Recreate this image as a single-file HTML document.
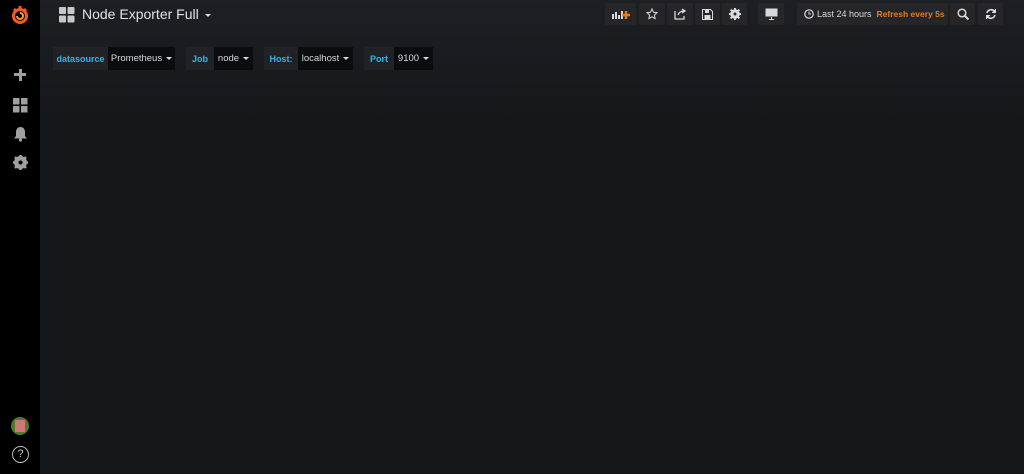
<!DOCTYPE html>
<html><head><style>
*{box-sizing:border-box;margin:0;padding:0}
body{width:1024px;height:474px;background:#161719;font-family:"Liberation Sans",sans-serif;position:relative;overflow:hidden;color:#d8d9da}
.side{position:absolute;left:0;top:0;width:40px;height:474px;background:#000}
.main{position:absolute;left:40px;top:0;right:0;height:474px;background:linear-gradient(#1e1f22 0,#161719 120px)}
.ab{position:absolute}
.btn{position:absolute;top:3px;height:22px;background:#262628;border-radius:2px;display:flex;align-items:center;justify-content:center;white-space:nowrap}
.btn svg{flex-shrink:0}
.lbl{position:absolute;top:47px;height:23px;background:#202226;color:#33b5e5;font-size:9px;font-weight:bold;display:flex;align-items:center;justify-content:center;white-space:nowrap}
.val{position:absolute;top:47px;height:23px;background:#0b0c0e;color:#d8d9da;font-size:9.5px;display:flex;align-items:center;justify-content:center;white-space:nowrap}
.car{display:inline-block;width:0;height:0;border-left:3px solid transparent;border-right:3px solid transparent;border-top:3px solid #d8d9da;margin-left:4px}
</style></head><body>
<div class="side">
<svg class="ab" style="left:9px;top:4px" width="22" height="22" viewBox="0 0 22 22"><circle cx="11" cy="12" r="8" fill="#f05a28"/><circle cx="11" cy="12" r="5" fill="#000"/><path d="M11 9a3 3 0 1 1-3 3" stroke="#f7a21b" stroke-width="2" fill="none"/><path d="M5 5l2 2M17 5l-2 2M11 2v3M3 12h2M19 12h-2" stroke="#f05a28" stroke-width="3"/></svg>
<div class="ab" style="left:14px;top:73px;width:12px;height:3px;background:#a0a0a0"></div>
<div class="ab" style="left:18.5px;top:69px;width:3px;height:12px;background:#a0a0a0"></div>
<svg class="ab" style="left:13px;top:98px" width="15" height="15"><rect x="0" y="0" width="6.5" height="6.5" fill="#a0a0a0"/><rect x="8" y="0" width="6.5" height="6.5" fill="#a0a0a0"/><rect x="0" y="8" width="6.5" height="6.5" fill="#a0a0a0"/><rect x="8" y="8" width="6.5" height="6.5" fill="#a0a0a0"/></svg>
<svg class="ab" style="left:13px;top:126px" width="15" height="16"><path d="M7.5 1c-3 0-4.5 2.5-4.5 5v4L1 12.5h13L12 10V6c0-2.5-1.5-5-4.5-5z" fill="#a0a0a0"/><circle cx="7.5" cy="14" r="1.6" fill="#a0a0a0"/></svg>
<svg class="ab" style="left:13px;top:155px" width="15" height="15" viewBox="0 0 15 15"><circle cx="7.5" cy="7.5" r="5" fill="none" stroke="#a0a0a0" stroke-width="3"/><path d="M7.5 0v15M0 7.5h15M2 2l11 11M13 2L2 13" stroke="#a0a0a0" stroke-width="2.5"/><circle cx="7.5" cy="7.5" r="2" fill="#000"/></svg>
<div class="ab" style="left:11px;top:417px;width:18px;height:18px;border-radius:50%;background:#4e7a2a;overflow:hidden"><div style="margin:3px 4px;width:10px;height:12px;background:#d07878"></div></div>
<div class="ab" style="left:12px;top:446px;width:17px;height:17px;border-radius:50%;border:1.3px solid #bbb;color:#ccc;font-size:11px;text-align:center;line-height:15px">?</div>
</div>
<div class="main"></div>
<svg class="ab" style="left:59px;top:7px" width="16" height="16"><rect x="0" y="0" width="7" height="7" rx="1" fill="#c8c8c8"/><rect x="8.5" y="0" width="7" height="7" rx="1" fill="#c8c8c8"/><rect x="0" y="8.5" width="7" height="7" rx="1" fill="#c8c8c8"/><rect x="8.5" y="8.5" width="7" height="7" rx="1" fill="#c8c8c8"/></svg>
<div class="ab" style="left:82px;top:6px;font-size:14px;color:#e3e3e3">Node Exporter Full<span class="car" style="margin-left:6px;vertical-align:middle"></span></div>

<div class="btn" style="left:605px;width:31px"><svg width="18" height="12"><path d="M1 11V6M4 11V4M7 11V7M10 11V3" stroke="#d8d9da" stroke-width="2"/><path d="M14 3v8M10 7h8" stroke="#eb7b18" stroke-width="2.5"/></svg></div>
<div class="btn" style="left:639px;width:26px"><svg width="12" height="12"><path d="M6 1l1.5 3.3 3.5.4-2.6 2.4.7 3.5L6 8.8 2.9 10.6l.7-3.5L1 4.7l3.5-.4z" fill="none" stroke="#d8d9da"/></svg></div>
<div class="btn" style="left:667px;width:26px"><svg width="12" height="12"><path d="M1 3v8h9V8M4 7c1-3 3-4 6-4M8 1l3 2-3 2" fill="none" stroke="#d8d9da" stroke-width="1.3"/></svg></div>
<div class="btn" style="left:695px;width:25px"><svg width="11" height="11"><path d="M.5.5h8l2 2v8H.5z" fill="none" stroke="#d8d9da"/><rect x="3" y="1" width="4" height="3" fill="#d8d9da"/><rect x="2.5" y="6" width="6" height="4" fill="#d8d9da"/></svg></div>
<div class="btn" style="left:722px;width:25px"><svg width="12" height="12" viewBox="0 0 15 15"><circle cx="7.5" cy="7.5" r="4.5" fill="none" stroke="#d8d9da" stroke-width="3"/><path d="M7.5 0v15M0 7.5h15M2 2l11 11M13 2L2 13" stroke="#d8d9da" stroke-width="2.5"/><circle cx="7.5" cy="7.5" r="1.8" fill="#262628"/></svg></div>
<div class="btn" style="left:758px;width:26px"><svg width="13" height="12"><rect x=".5" y=".5" width="12" height="8" fill="#d8d9da"/><path d="M4 11.5h5M6.5 9v2" stroke="#d8d9da"/></svg></div>
<div class="btn" style="left:797px;width:151px;font-size:9px;justify-content:flex-start;padding-left:7px;overflow:hidden"><svg width="10" height="10" style="margin-right:3px"><circle cx="5" cy="5" r="4.2" fill="none" stroke="#d8d9da" stroke-width="1.2"/><path d="M5 2.5V5h2" stroke="#d8d9da" fill="none"/></svg>Last 24 hours<span style="color:#eb7b18;font-weight:bold;margin-left:5px;font-size:8.5px">Refresh every 5s</span></div>
<div class="btn" style="left:950px;width:25px"><svg width="12" height="12"><circle cx="5" cy="5" r="3.8" fill="none" stroke="#d8d9da" stroke-width="1.5"/><path d="M8 8l3.5 3.5" stroke="#d8d9da" stroke-width="2"/></svg></div>
<div class="btn" style="left:978px;width:25px"><svg width="12" height="12"><path d="M2 5a4.2 4.2 0 0 1 7.5-1.5M10 7a4.2 4.2 0 0 1-7.5 1.5" fill="none" stroke="#d8d9da" stroke-width="1.6"/><path d="M10.5 1v3.5H7M1.5 11V7.5H5" fill="#d8d9da" stroke="#d8d9da"/></svg></div>

<div class="lbl" style="left:53px;width:55px">datasource</div><div class="val" style="left:108px;width:67px">Prometheus<span class="car"></span></div>
<div class="lbl" style="left:186px;width:28px">Job</div><div class="val" style="left:214px;width:39px">node<span class="car"></span></div>
<div class="lbl" style="left:264px;width:34px">Host:</div><div class="val" style="left:298px;width:55px">localhost<span class="car"></span></div>
<div class="lbl" style="left:364px;width:30px">Port</div><div class="val" style="left:394px;width:39px">9100<span class="car"></span></div>
</body></html>
